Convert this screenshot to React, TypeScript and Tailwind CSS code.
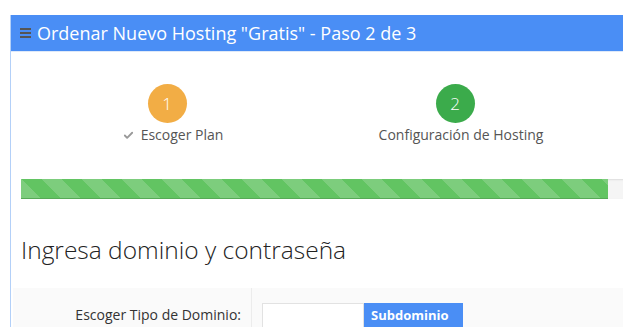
import { Check } from "lucide-react";

const steps = [
  { n: 1, label: "Escoger Plan", color: "bg-[#f2ad45]", done: true },
  { n: 2, label: "Configuración de Hosting", color: "bg-[#3bab4b]", done: false },
];

export default function App() {
  return (
    <div className="w-[623px] h-[327px] overflow-hidden bg-white font-['Open_Sans',sans-serif] text-[#333]">
      <div className="pt-[15px] pl-[10px]">
        <div className="w-[900px] border-l border-[#b3d0f8]">
          {/* header */}
          <div className="h-[37px] bg-[#4a8ef5] border-b border-[#dfe9f8] flex items-center pl-[9px] gap-[6px]">
            <div className="flex flex-col gap-[2px] w-[11px]">
              <span className="h-[2px] bg-[#555]" />
              <span className="h-[2px] bg-[#555]" />
              <span className="h-[2px] bg-[#555]" />
            </div>
            <h1 className="text-[18px] leading-none text-white">
              Ordenar Nuevo Hosting "Gratis" - Paso 2 de 3
            </h1>
          </div>

          <div className="pl-[10px]">
            {/* steps */}
            <div className="grid grid-cols-[288px_288px] pl-[2px] pt-[32px]">
              {steps.map((s) => (
                <div key={s.n} className="flex flex-col items-center">
                  <div
                    className={`w-[39px] h-[39px] rounded-full ${s.color} text-white text-[17px] font-light flex items-center justify-center`}
                  >
                    {s.n}
                  </div>
                  <div className="mt-[2px] flex items-center gap-[7px] text-[14px] leading-[20px] text-[#555] pl-[12px]">
                    {s.done && <Check size={11} strokeWidth={4} className="text-[#999]" />}
                    <span>{s.label}</span>
                  </div>
                </div>
              ))}
            </div>

            {/* progress */}
            <div className="mt-[34px] h-[20px] bg-[#f5f5f5] shadow-[inset_0_1px_2px_rgba(0,0,0,0.1)]">
              <div className="h-full w-[587px] bg-[#62c462] border-b border-[#57a957] bg-[repeating-linear-gradient(45deg,#7dcd7d_0,#7dcd7d_14.14px,#62c462_14.14px,#62c462_28.28px)]" />
            </div>

            <h2 className="mt-[36px] text-[24.5px] leading-[29px] font-light text-[#222]">
              Ingresa dominio y contraseña
            </h2>
          </div>

          {/* form */}
          <div className="mt-[24px] ml-[2px] flex bg-[#fafafa] h-[60px]">
            <div className="w-[239px] border-r border-[#ececec] text-right pr-[10px] pt-[17px] text-[14px] leading-[20px] text-[#333]">
              Escoger Tipo de Dominio:
            </div>
            <div className="pl-[10px] pt-[15px] flex">
              <div className="w-[102px] h-[40px] bg-white border border-[#e2e2e2]" />
              <div className="w-[99px] h-[40px] bg-[#4a8ef5] text-white font-bold text-[13px] flex items-start pt-[3px] pl-[7px]">
                Subdominio
              </div>
            </div>
          </div>
        </div>
      </div>
    </div>
  );
}
